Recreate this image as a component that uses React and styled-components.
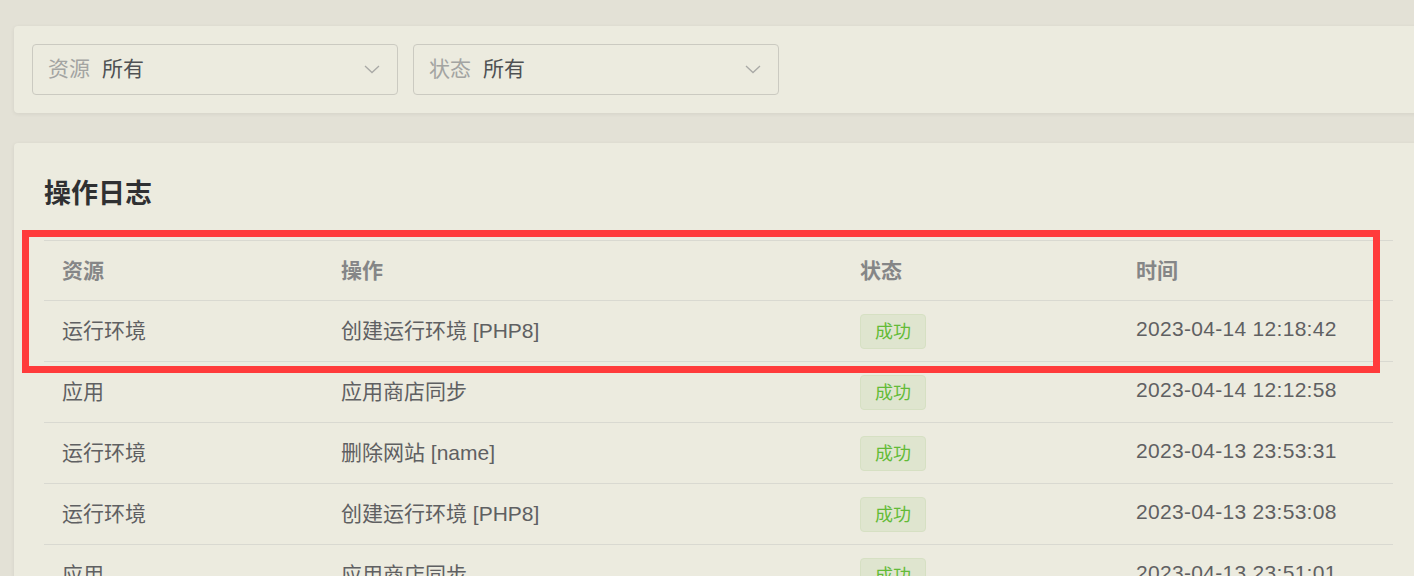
import React from 'react';
import styled, { createGlobalStyle } from 'styled-components';

const GlobalStyle = createGlobalStyle`
  html, body { margin: 0; padding: 0; background: #e3e1d6; overflow: hidden; }
  body { font-family: "Liberation Sans", "Noto Sans CJK SC", sans-serif; }
`;

const Page = styled.div`
  width: 1409px;
  padding: 26px 0 0 14px;
  display: flex;
  flex-direction: column;
  gap: 30px;
`;

const Card = styled.div`
  position: relative;
  background: #ecebdf;
  border-radius: 4px;
  box-shadow: 0 1px 4px rgba(0, 0, 0, 0.07);
  padding: ${p => p.padding || '18px'};
`;

const Filters = styled.div`
  display: flex;
  gap: 15px;
`;

const Select = styled.div`
  box-sizing: border-box;
  width: 366px;
  height: 51px;
  border: 1px solid #cbcac1;
  border-radius: 4px;
  display: flex;
  align-items: center;
  padding: 0 17px 0 15px;
  font-size: 21px;
`;

const Label = styled.span`
  color: #a3a4a2;
  margin: -5px 12px 0 0;
`;

const Value = styled.span`
  color: #4f5153;
  margin-top: -5px;
  flex: 1;
`;

const Title = styled.h2`
  margin: 0 0 25px;
  height: 42px;
  line-height: 42px;
  font-size: 27px;
  font-weight: bold;
  color: #2f3032;
`;

const Table = styled.table`
  width: 1349px;
  table-layout: fixed;
  border-collapse: collapse;
  border-top: 1px solid #d9d9d1;
  font-size: 21px;
`;

const Th = styled.th`
  height: 55px;
  padding: 0 18px 4px;
  text-align: left;
  color: #858687;
  font-weight: bold;
  border-bottom: 1px solid #d9d9d1;
`;

const Td = styled.td`
  height: 56px;
  padding: 0 18px 4px;
  color: #5f6062;
  border-bottom: 1px solid #d9d9d1;
  white-space: nowrap;
  letter-spacing: ${p => (p.mono ? '0.3px' : 'normal')};
`;

const Badge = styled.span`
  display: inline-flex;
  align-items: center;
  box-sizing: border-box;
  height: 35px;
  padding: 0 14px 3px;
  margin-top: 4px;
  border: 1px solid #d6e0c3;
  border-radius: 4px;
  background: #dfe5cf;
  color: #63bb37;
  font-size: 18px;
  vertical-align: middle;
`;

const Highlight = styled.div`
  position: absolute;
  left: 8px;
  top: 87px;
  width: 1358px;
  height: 143px;
  box-sizing: border-box;
  border: 7px solid #ff3b3b;
  pointer-events: none;
`;

const Chevron = () => (
  <svg width="16" height="9" viewBox="0 0 16 9">
    <polyline points="1,1 8,7.5 15,1" fill="none" stroke="#a9a9a6" strokeWidth="1.3" />
  </svg>
);

const rows = [
  ['运行环境', '创建运行环境 [PHP8]', '2023-04-14 12:18:42'],
  ['应用', '应用商店同步', '2023-04-14 12:12:58'],
  ['运行环境', '删除网站 [name]', '2023-04-13 23:53:31'],
  ['运行环境', '创建运行环境 [PHP8]', '2023-04-13 23:53:08'],
  ['应用', '应用商店同步', '2023-04-13 23:51:01'],
];

export default function App() {
  return (
    <Page>
      <GlobalStyle />
      <Card>
        <Filters>
          <Select><Label>资源</Label><Value>所有</Value><Chevron /></Select>
          <Select><Label>状态</Label><Value>所有</Value><Chevron /></Select>
        </Filters>
      </Card>
      <Card padding="30px 30px 0">
        <Title>操作日志</Title>
        <Table>
          <colgroup>
            <col style={{ width: 279 }} />
            <col style={{ width: 519 }} />
            <col style={{ width: 276 }} />
            <col style={{ width: 275 }} />
          </colgroup>
          <thead>
            <tr><Th>资源</Th><Th>操作</Th><Th>状态</Th><Th>时间</Th></tr>
          </thead>
          <tbody>
            {rows.map((r, i) => (
              <tr key={i}>
                <Td>{r[0]}</Td>
                <Td>{r[1]}</Td>
                <Td><Badge>成功</Badge></Td>
                <Td mono>{r[2]}</Td>
              </tr>
            ))}
          </tbody>
        </Table>
        <Highlight />
      </Card>
    </Page>
  );
}
